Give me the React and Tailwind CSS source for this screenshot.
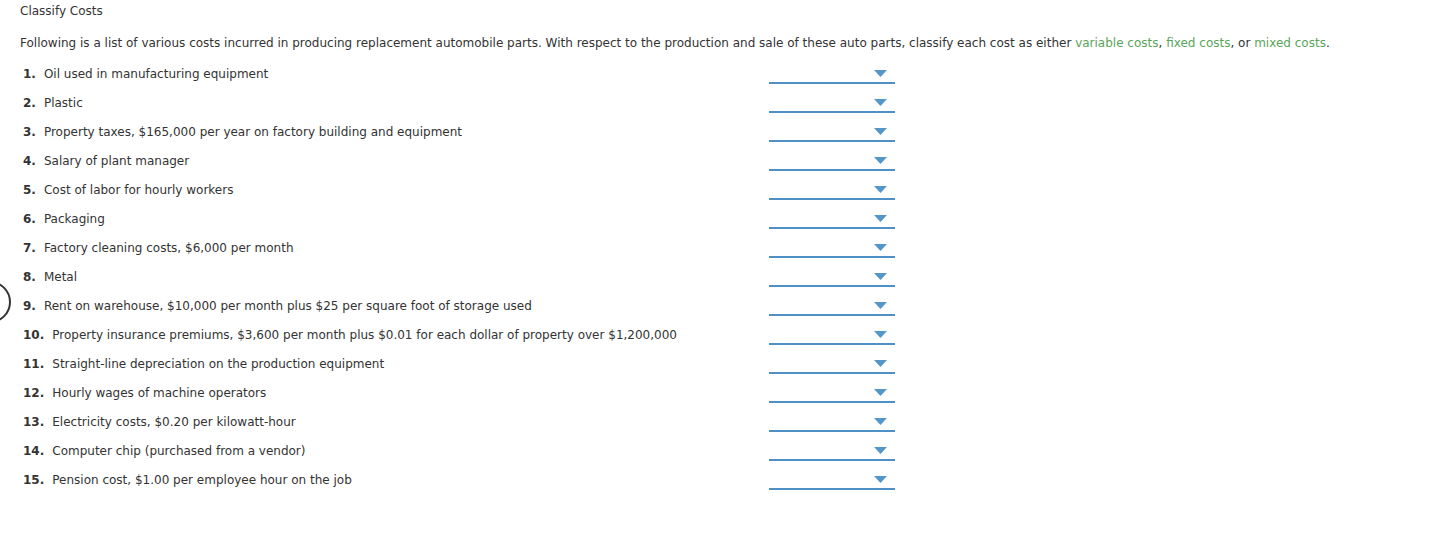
import React from 'react'

const items = [
  'Oil used in manufacturing equipment',
  'Plastic',
  'Property taxes, $165,000 per year on factory building and equipment',
  'Salary of plant manager',
  'Cost of labor for hourly workers',
  'Packaging',
  'Factory cleaning costs, $6,000 per month',
  'Metal',
  'Rent on warehouse, $10,000 per month plus $25 per square foot of storage used',
  'Property insurance premiums, $3,600 per month plus $0.01 for each dollar of property over $1,200,000',
  'Straight-line depreciation on the production equipment',
  'Hourly wages of machine operators',
  'Electricity costs, $0.20 per kilowatt-hour',
  'Computer chip (purchased from a vendor)',
  'Pension cost, $1.00 per employee hour on the job',
]

function Dropdown() {
  return (
    <div className="relative w-[126px] h-[29px] border-b-2 border-[#4f91c6]">
      <svg className="absolute right-[8px] top-[15px]" width="13" height="7" viewBox="0 0 13 7">
        <polygon points="0,0 13,0 6.5,7" fill="#5596c9" />
      </svg>
    </div>
  )
}

export default function App() {
  return (
    <div className="relative w-[1444px] h-[558px] bg-white text-[#333] text-[12px] overflow-hidden" style={{ fontFamily: '"DejaVu Sans", Verdana, sans-serif' }}>
      {/* focus ring remnant on the left edge */}
      <div className="absolute left-[-31px] top-[281px] w-[42px] h-[42px] rounded-full border-2 border-[#333]" />

      <div className="pl-[20px] pt-[3px]">
        <div className="leading-[16px]">Classify Costs</div>
        <p className="mt-[16px] leading-[16px]">
          Following is a list of various costs incurred in producing replacement automobile parts. With respect to the production and sale of these auto parts, classify each cost as either{' '}
          <span className="text-[#5aa55a]">variable costs</span>,{' '}
          <span className="text-[#5aa55a]">fixed costs</span>, or{' '}
          <span className="text-[#5aa55a]">mixed costs</span>.
        </p>

        <div className="mt-[9px] flex flex-col">
          {items.map((text, i) => (
            <div key={i} className="flex items-start h-[29px]">
              <div className="w-[749px] pl-[3px] pt-[6px] leading-[16px]">
                <span className="font-bold">{i + 1}.</span>
                <span className="ml-[8px]">{text}</span>
              </div>
              <div className="-mt-[5px]">
                <Dropdown />
              </div>
            </div>
          ))}
        </div>
      </div>
    </div>
  )
}
